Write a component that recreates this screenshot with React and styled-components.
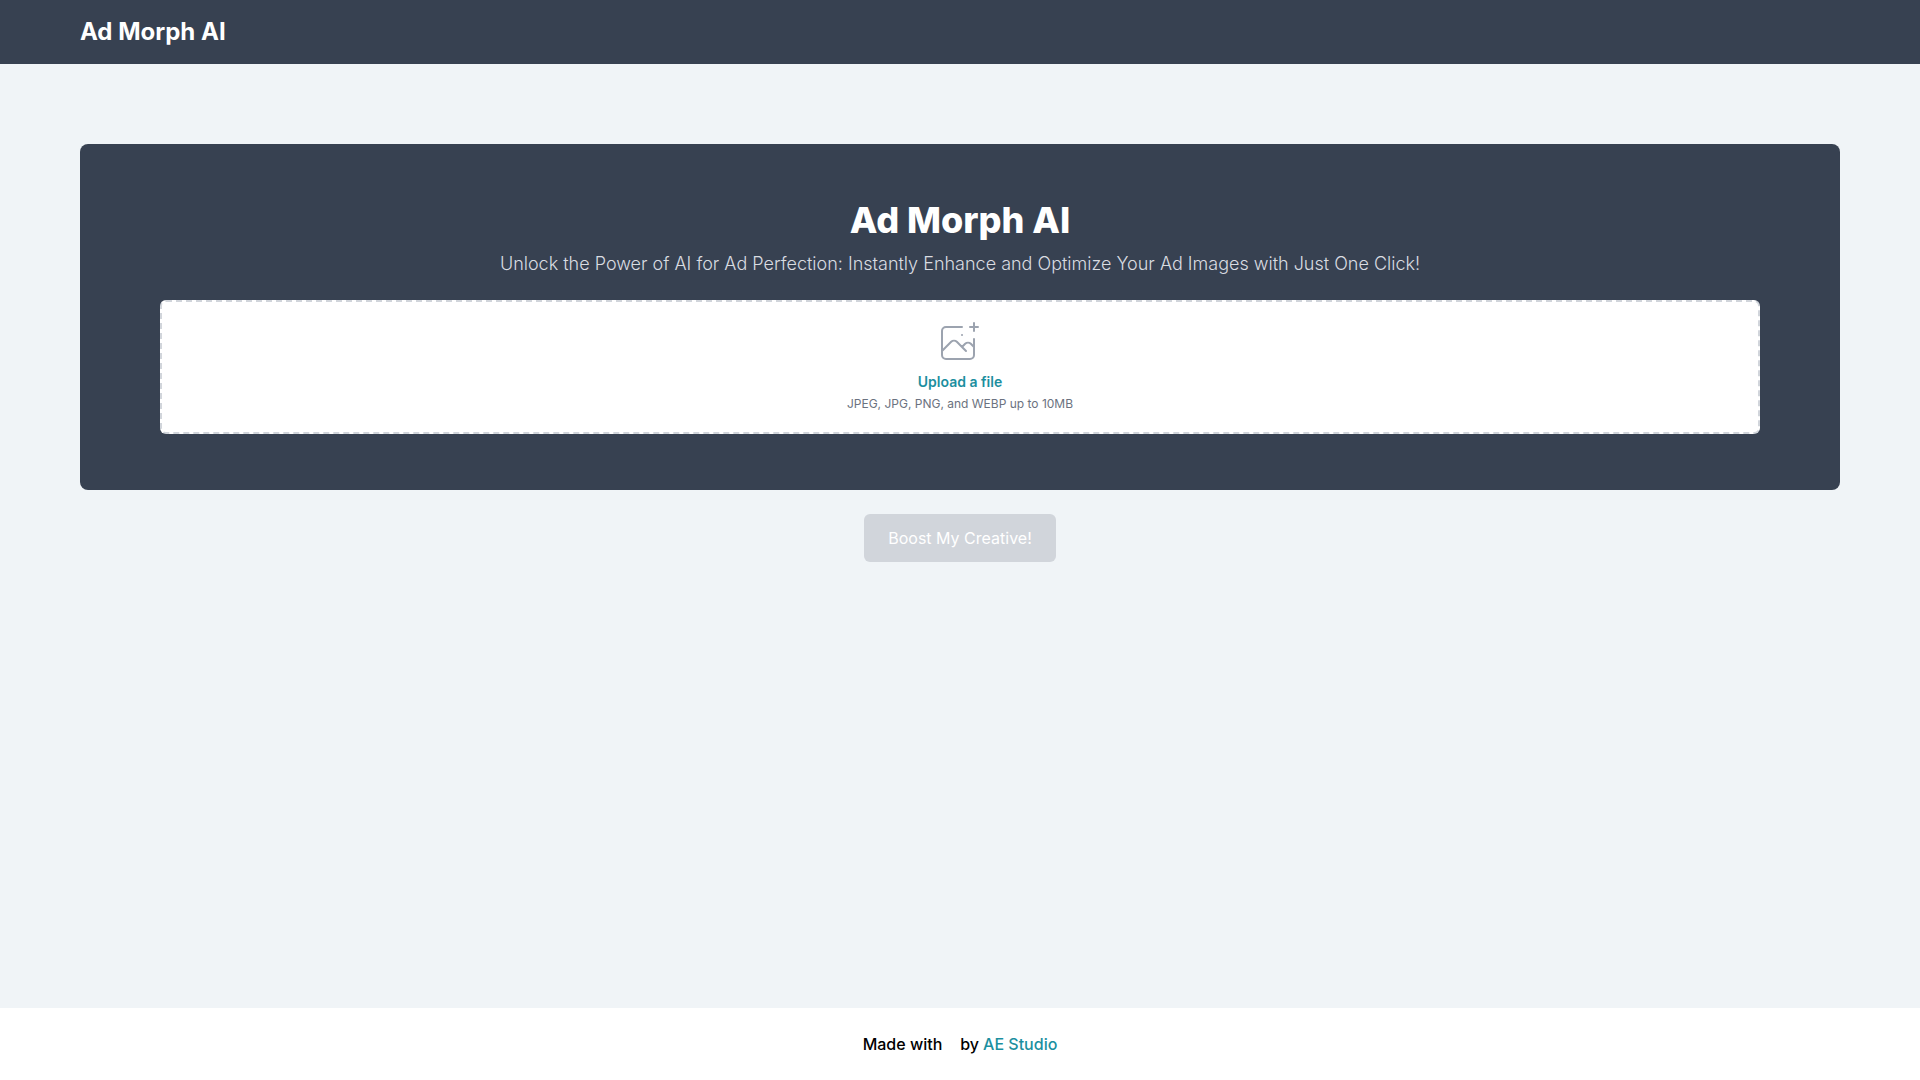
import React from 'react';
import styled, { createGlobalStyle } from 'styled-components';

const GlobalStyle = createGlobalStyle`
  *, *::before, *::after {
    box-sizing: border-box;
  }

  body {
    margin: 0;
    background: #f0f4f7;
    color: #000000;
    font-family: Inter, 'Liberation Sans', sans-serif;
    font-size: 16px;
    line-height: 24px;
  }
`;

const Page = styled.div`
  min-height: 100vh;
  display: flex;
  flex-direction: column;
`;

const Header = styled.header`
  display: flex;
  align-items: center;
  height: 64px;
  padding: 0 80px;
  background: #374151;
`;

const Brand = styled.a`
  color: white;
  font-size: 24px;
  font-weight: 700;
  line-height: 32px;
  text-decoration: none;
`;

const Main = styled.main`
  flex: 1;
  display: flex;
  flex-direction: column;
  align-items: center;
  gap: 24px;
  padding: 80px;
`;

const Hero = styled.section`
  width: 100%;
  padding: 56px 80px;
  border-radius: 8px;
  background: #374151;
  text-align: center;
`;

const Title = styled.h1`
  margin: 0 0 8px;
  color: white;
  font-size: 36px;
  font-weight: 800;
  line-height: 40px;
`;

const Subtitle = styled.p`
  margin: 0 0 20px;
  color: #d9dce1;
  font-size: 18px;
  font-weight: 300;
  line-height: 32px;
`;

const DropZone = styled.div`
  display: flex;
  flex-direction: column;
  align-items: center;
  padding: 16px 20px 18px;
  border: 2px dashed #d1d5db;
  border-radius: 6px;
  background: white;
`;

const UploadIcon = styled.svg`
  width: 48px;
  height: 48px;
  margin-bottom: 4px;
  color: #9ca3af;
`;

const UploadLabel = styled.label`
  color: #1c8fa0;
  font-size: 14px;
  font-weight: 600;
  line-height: 24px;
  cursor: pointer;
`;

const FileInput = styled.input`
  position: absolute;
  width: 1px;
  height: 1px;
  overflow: hidden;
  clip-path: inset(50%);
`;

const Hint = styled.p`
  margin: 0;
  color: #6b7280;
  font-size: 12px;
  line-height: 20px;
`;

const BoostButton = styled.button`
  padding: 12px 24px;
  border: 0;
  border-radius: 6px;
  background: #d1d5db;
  color: white;
  font: inherit;
`;

const Footer = styled.footer`
  display: flex;
  justify-content: center;
  padding: 24px;
  background: white;
  font-weight: 500;
`;

const MadeWith = styled.span`
  margin-right: 18px;
`;

const StudioLink = styled.a`
  margin-left: 4px;
  color: #1c8fa0;
  text-decoration: none;
`;

const App = () => {
  return (
    <>
      <GlobalStyle />
      <Page>
        <Header>
          <Brand href="#">Ad Morph AI</Brand>
        </Header>
        <Main>
          <Hero>
            <Title>Ad Morph AI</Title>
            <Subtitle>
              Unlock the Power of AI for Ad Perfection: Instantly Enhance and
              Optimize Your Ad Images with Just One Click!
            </Subtitle>
            <DropZone>
              <UploadIcon
                viewBox="2 -1 48 48"
                fill="none"
                stroke="currentColor"
                strokeWidth="2"
                strokeLinecap="round"
                strokeLinejoin="round"
                aria-hidden="true"
              >
                <path d="M28 8H12a4 4 0 00-4 4v20m32-12v8m0 0v8a4 4 0 01-4 4H12a4 4 0 01-4-4v-4m32-4l-3.172-3.172a4 4 0 00-5.656 0L28 28M8 32l9.172-9.172a4 4 0 015.656 0L28 28m0 0l4 4m4-24h8m-4-4v8m-12 4h.02" />
              </UploadIcon>
              <UploadLabel htmlFor="file-upload">Upload a file</UploadLabel>
              <FileInput
                id="file-upload"
                type="file"
                accept=".jpeg,.jpg,.png,.webp"
              />
              <Hint>JPEG, JPG, PNG, and WEBP up to 10MB</Hint>
            </DropZone>
          </Hero>
          <BoostButton type="button" disabled>
            Boost My Creative!
          </BoostButton>
        </Main>
        <Footer>
          <MadeWith>Made with</MadeWith>
          <span>by</span>
          <StudioLink href="#">AE Studio</StudioLink>
        </Footer>
      </Page>
    </>
  );
};

export default App;
